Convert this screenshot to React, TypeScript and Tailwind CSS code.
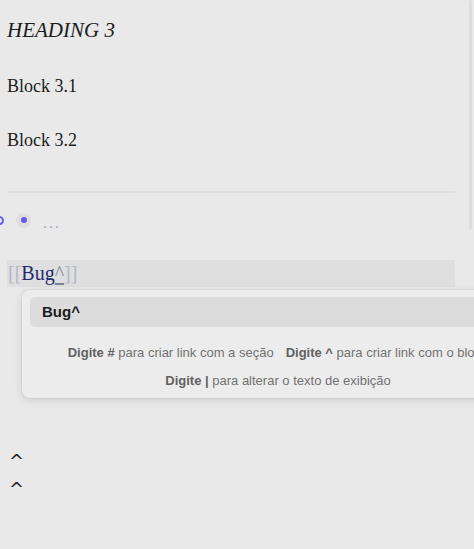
import React from 'react';

const serif = { fontFamily: '"Liberation Serif", "Times New Roman", serif' };

function Hint({ keyText, rest }: { keyText: string; rest: string }) {
  return (
    <span className="whitespace-nowrap">
      <span className="font-bold text-[#626262]">Digite {keyText}</span> {rest}
    </span>
  );
}

export default function App() {
  return (
    <div
      className="relative h-[549px] w-[474px] overflow-hidden bg-[#e9e9e9] text-[#1c1c1c]"
      style={serif}
    >
      {/* Editor content */}
      <div className="flex flex-col pl-[7px] pr-[19px]">
        <div className="mt-[17px] text-[21px] italic leading-[26px]">HEADING 3</div>
        <div className="mt-[30px] text-[18px] leading-[26px]">Block 3.1</div>
        <div className="mt-[28px] text-[18px] leading-[26px]">Block 3.2</div>

        <div className="mt-[38px] h-[2px] bg-[#dedede]" />

        {/* Bullet row */}
        <div className="mt-[19px] flex h-[16px] items-center">
          <div className="-ml-[12px] h-[9px] w-[9px] rounded-full border-2 border-[#6b5cf0]" />
          <div className="ml-[12px] flex h-[15px] w-[15px] items-center justify-center rounded-full bg-[#dedede]">
            <div className="h-[6px] w-[6px] rounded-full bg-[#6457ee]" />
          </div>
          <span className="ml-[12px] mt-[6px] text-[16px] leading-none tracking-[2px] text-[#a7a9bd]">
            ...
          </span>
        </div>

        {/* Active link row */}
        <div className="mt-[32px] h-[27px] bg-[#dfdfdf] pl-[1px] text-[20px] leading-[27px]">
          <span className="text-[#b4b7c6]">[[</span>
          <span className="text-[#1f2c6e]">Bug</span>
          <span className="text-[#7d8298] underline decoration-[#7d8298] underline-offset-[3px]">^</span>
          <span className="text-[#b4b7c6]">]]</span>
        </div>

        <div
          className="mt-[160px] flex flex-col pl-[2px] text-[18px] leading-[28px] text-[#222]"
          style={{ fontFamily: '"DejaVu Sans", sans-serif' }}
        >
          <span>^</span>
          <span>^</span>
        </div>
      </div>

      {/* Scrollbar */}
      <div className="absolute right-[2px] top-0 h-[229px] w-[3px] rounded-full bg-[#dcdcdc]" />

      {/* Link suggestion popup */}
      <div
        className="absolute left-[22px] top-[290px] h-[108px] w-[512px] rounded-[8px] bg-[#ececec] px-[8px] pt-[7px] shadow-[0_2px_8px_rgba(0,0,0,0.12),0_0_0_1px_rgba(0,0,0,0.03)]"
        style={{ fontFamily: '"Liberation Sans", Arial, sans-serif' }}
      >
        <div className="flex h-[30px] items-center rounded-[5px] bg-[#dcdcdc] pl-[12px] text-[15px] font-bold text-[#1a1a1a]">
          Bug^
        </div>
        <div className="mt-[12px] flex flex-wrap justify-center gap-x-[12px] text-[13px] leading-[28px] text-[#727272]">
          <Hint keyText="#" rest="para criar link com a seção" />
          <Hint keyText="^" rest="para criar link com o bloco" />
          <Hint keyText="|" rest="para alterar o texto de exibição" />
        </div>
      </div>
    </div>
  );
}
